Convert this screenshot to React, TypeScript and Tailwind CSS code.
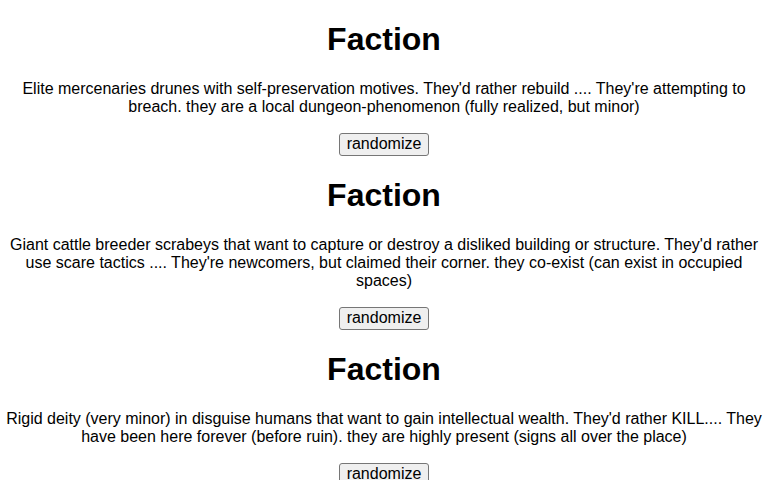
import React from "react";

const factions = [
  "Elite mercenaries drunes with self-preservation motives. They'd rather rebuild .... They're attempting to breach. they are a local dungeon-phenomenon (fully realized, but minor)",
  "Giant cattle breeder scrabeys that want to capture or destroy a disliked building or structure. They'd rather use scare tactics .... They're newcomers, but claimed their corner. they co-exist (can exist in occupied spaces)",
  "Rigid deity (very minor) in disguise humans that want to gain intellectual wealth. They'd rather KILL.... They have been here forever (before ruin). they are highly present (signs all over the place)",
];

export default function App() {
  return (
    <div className="font-['Liberation_Sans',Arial,sans-serif] text-black text-center text-[16px] leading-[normal] bg-white">
      {factions.map((f, i) => (
        <div key={i}>
          <h1 className="text-[32px] font-bold leading-[normal] my-[21.44px]">Faction</h1>
          <p className="my-4 leading-[normal]">{f}</p>
          <div className="flex justify-center pt-[1px]">
            <button className="inline-flex items-center justify-center h-[23px] bg-[#efefef] border border-[#767676] rounded-[3px] px-[7px] text-[16px] leading-[normal] text-black font-['Liberation_Sans',Arial,sans-serif]">
              randomize
            </button>
          </div>
        </div>
      ))}
    </div>
  );
}
